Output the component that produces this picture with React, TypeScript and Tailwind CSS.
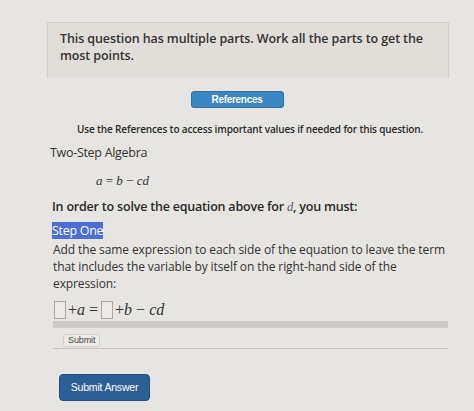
import React from "react";

const sans = { fontFamily: '"Open Sans", "Noto Sans", sans-serif' };
const arial = { fontFamily: '"Liberation Sans", Arial, sans-serif' };
const serif = { fontFamily: '"Liberation Serif", "Times New Roman", serif' };

function MathVar({ children }: { children: React.ReactNode }) {
  return <span className="italic">{children}</span>;
}

function Blank() {
  return <span className="inline-block w-[12px] h-[18px] border border-[#a9a7a3] bg-[#eceae6]" />;
}

export default function App() {
  return (
    <div className="w-[474px] h-[411px] overflow-hidden bg-[#e7e5e1] text-[#2a2a2a]" style={sans}>
      <div className="pt-[22px] pl-[47px] pr-[25px]">
        <div className="h-[56px] bg-[#e1deda] border-t border-l border-r border-[#d0cec9] pl-[12px] pt-[7px]">
          <p className="text-[12.5px] font-semibold leading-[17px] tracking-[-0.1px] text-[#333]">
            This question has multiple parts. Work all the parts to get the most points.
          </p>
        </div>
      </div>

      <div className="flex justify-center pt-[13px]">
        <button
          className="w-[93px] h-[17px] rounded-[3px] bg-[#3a87c1] border border-[#2e70a4] text-white text-[10px] font-bold leading-[15px] tracking-[-0.3px]"
          style={arial}
        >
          References
        </button>
      </div>

      <p className="pt-[14px] pl-[77px] text-[10px] font-semibold leading-[14px] tracking-[-0.15px] text-[#2a2a2a]">
        Use the References to access important values if needed for this question.
      </p>

      <div className="pl-[50px] pr-[24px]">
        <p className="pt-[8px] text-[12.5px] leading-[18px] tracking-[-0.3px] text-[#333]">Two-Step Algebra</p>
        <p className="pt-[10px] pl-[46px] text-[13px] leading-[18px] text-[#333]" style={serif}>
          <MathVar>a</MathVar> = <MathVar>b</MathVar> − <MathVar>cd</MathVar>
        </p>

        <p className="pt-[8px] pl-[2px] text-[12.5px] font-semibold leading-[18px] tracking-[-0.2px] text-[#2a2a2a]">
          In order to solve the equation above for{" "}
          <span className="italic font-normal text-[#555]" style={serif}>
            d
          </span>
          , you must:
        </p>

        <div className="pt-[6px] pl-[2px] text-[12.5px] leading-[17px]">
          <span className="bg-[#4d6ed6] text-white tracking-[-0.3px]">Step One</span>
        </div>

        <p className="pt-[2px] pl-[3px] w-[398px] text-[12px] leading-[17px] tracking-[-0.1px] text-[#333]">
          Add the same expression to each side of the equation to leave the term that includes the variable by
          itself on the right-hand side of the expression:
        </p>

        <div className="pt-[8px] pl-[4px] flex items-center text-[16px] leading-[20px] text-[#333]" style={serif}>
          <Blank />
          <span className="pl-[2px]">
            +<MathVar>a</MathVar>
          </span>
          <span className="pl-[4px] pr-[3px]">=</span>
          <Blank />
          <span className="pl-[2px]">
            +<MathVar>b</MathVar> − <MathVar>cd</MathVar>
          </span>
        </div>

        <div className="mt-[1px] ml-[3px] w-[395px] h-[7px] bg-[#cecbc7]" />

        <div className="ml-[3px] w-[395px] flex items-start border-b border-[#c6c4c0] pt-[6px] pb-[1px] pl-[10px]">
          <button
            className="h-[13px] px-[4px] rounded-[3px] border border-[#d2d0cc] bg-[#edebe7] text-[9px] leading-[11px] tracking-[-0.1px] text-[#444]"
            style={arial}
          >
            Submit
          </button>
        </div>

        <div className="flex pt-[25px] pl-[9px]">
          <button
            className="w-[91px] h-[27px] rounded-[4px] bg-[#2c5f95] border border-[#234d7c] text-white text-[10.5px] leading-[25px] tracking-[-0.2px]"
            style={arial}
          >
            Submit Answer
          </button>
        </div>
      </div>
    </div>
  );
}
